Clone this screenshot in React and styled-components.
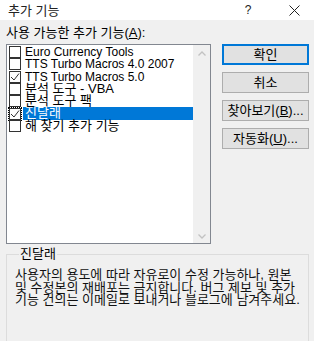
import React from 'react';
import styled, {createGlobalStyle} from 'styled-components';

const GlobalStyle = createGlobalStyle`
  body {
    margin: 0;
    background: #f0f0f0;
    font-family: "Liberation Sans", "Noto Sans CJK KR", sans-serif;
    font-size: 13px;
    color: #000;
  }
`;

const Dialog = styled.div`
  width: 314px;
  height: 341px;
  overflow: hidden;
  display: flex;
  flex-direction: column;
  background: #f0f0f0;
`;

const TitleBar = styled.div`
  height: 20px;
  display: flex;
  align-items: center;
  background: #fff;
  padding-left: 8px;
`;

const Title = styled.div`
  flex: 1;
  line-height: 15px;
  color: #222;
`;

const TitleButton = styled.div`
  width: ${props => props.w}px;
  height: 20px;
  display: flex;
  align-items: center;
  justify-content: center;
  font-size: 12px;
  color: #222;
`;

const Body = styled.div`
  padding: 0 5px 0 6px;
  display: flex;
  flex-direction: column;
`;

const ListLabel = styled.div`
  margin: 5px 0 4px;
  line-height: 15px;
  height: 15px;
  white-space: nowrap;
  u { text-decoration: underline; }
`;

const MainRow = styled.div`
  display: flex;
  align-items: flex-start;
`;

const ListBox = styled.div`
  width: 205px;
  height: 200px;
  box-sizing: border-box;
  border: 1px solid #828790;
  background: #fff;
  display: flex;
`;

const Items = styled.div`
  flex: 1;
  padding-top: 1px;
`;

const Item = styled.div`
  height: 12.3px;
  display: flex;
  align-items: center;
  padding-left: 2px;
`;

const Box = styled.span`
  width: 12px;
  height: 12px;
  flex: none;
  box-sizing: border-box;
  border: 1px solid #333;
  background: #fff;
  display: flex;
  align-items: center;
  justify-content: center;
  outline: ${props => (props.focus ? '1px dotted #000' : 'none')};
`;

const ItemText = styled.span`
  flex: 1;
  margin-left: 2px;
  padding-left: 2px;
  height: 12.3px;
  line-height: 12.3px;
  font-size: ${props => (props.latin ? 12 : 13)}px;
  white-space: nowrap;
  background: ${props => (props.selected ? '#0078d7' : 'transparent')};
  color: ${props => (props.selected ? '#fff' : '#000')};
`;

const ScrollBar = styled.div`
  width: 17px;
  background: #f0f0f0;
  display: flex;
  flex-direction: column;
  justify-content: space-between;
  align-items: center;
  padding: 6px 0 4px;
  box-sizing: border-box;
`;

const Buttons = styled.div`
  margin-left: 11px;
  width: 87px;
  display: flex;
  flex-direction: column;
  gap: 7px;
`;

const Button = styled.button`
  height: 21px;
  width: 87px;
  box-sizing: border-box;
  padding: 0;
  font: inherit;
  font-size: 13px;
  line-height: 15px;
  white-space: nowrap;
  color: #000;
  background: #e1e1e1;
  border: ${props => (props.primary ? '2px solid #0078d7' : '1px solid #adadad')};
  u { text-decoration: underline; }
`;

const GroupBox = styled.fieldset`
  margin: 3px 0 0;
  padding: 8px 8px 0;
  border: 1px solid #dcdcdc;
  height: 120px;
  min-inline-size: 0;
`;

const Legend = styled.legend`
  padding: 0 1px;
  margin-left: 4px;
  line-height: 14px;
`;

const Description = styled.div`
  line-height: 12.5px;
  white-space: nowrap;
  color: #111;
`;

const Check = () => (
  <svg width="10" height="10" viewBox="0 0 10 10">
    <path d="M1 5 L4 8 L9 1.5" fill="none" stroke="#333" strokeWidth="1" />
  </svg>
);

const Chevron = ({down}) => (
  <svg width="8" height="5" viewBox="0 0 8 5">
    <path d={down ? 'M0.5 0.5 L4 4 L7.5 0.5' : 'M0.5 4.5 L4 1 L7.5 4.5'} fill="none" stroke="#c2c2c2" strokeWidth="1.3" />
  </svg>
);

const addins = [
  {name: 'Euro Currency Tools', latin: true},
  {name: 'TTS Turbo Macros 4.0 2007', latin: true},
  {name: 'TTS Turbo Macros 5.0', latin: true, checked: true},
  {name: '분석 도구 - VBA'},
  {name: '분석 도구 팩'},
  {name: '진달래', checked: true, selected: true},
  {name: '해 찾기 추가 기능'},
];

export default function App() {
  return (
    <Dialog>
      <GlobalStyle />
      <TitleBar>
        <Title>추가 기능</Title>
        <TitleButton w={52}>?</TitleButton>
        <TitleButton w={40}>
          <svg width="11" height="11" viewBox="0 0 11 11">
            <path d="M0.5 0.5 L10.5 10.5 M10.5 0.5 L0.5 10.5" stroke="#222" strokeWidth="1" />
          </svg>
        </TitleButton>
      </TitleBar>
      <Body>
        <ListLabel>사용 가능한 추가 기능(<u>A</u>):</ListLabel>
        <MainRow>
          <ListBox>
            <Items>
              {addins.map(a => (
                <Item key={a.name}>
                  <Box focus={a.selected}>{a.checked && <Check />}</Box>
                  <ItemText latin={a.latin} selected={a.selected}>{a.name}</ItemText>
                </Item>
              ))}
            </Items>
            <ScrollBar>
              <Chevron />
              <Chevron down />
            </ScrollBar>
          </ListBox>
          <Buttons>
            <Button primary>확인</Button>
            <Button>취소</Button>
            <Button>찾아보기(<u>B</u>)...</Button>
            <Button>자동화(<u>U</u>)...</Button>
          </Buttons>
        </MainRow>
        <GroupBox>
          <Legend>진달래</Legend>
          <Description>
            사용자의 용도에 따라 자유로이 수정 가능하나, 원본<br />
            및 수정본의 재배포는 금지합니다. 버그 제보 및 추가<br />
            기능 건의는 이메일로 보내거나 블로그에 남겨주세요.
          </Description>
        </GroupBox>
      </Body>
    </Dialog>
  );
}
